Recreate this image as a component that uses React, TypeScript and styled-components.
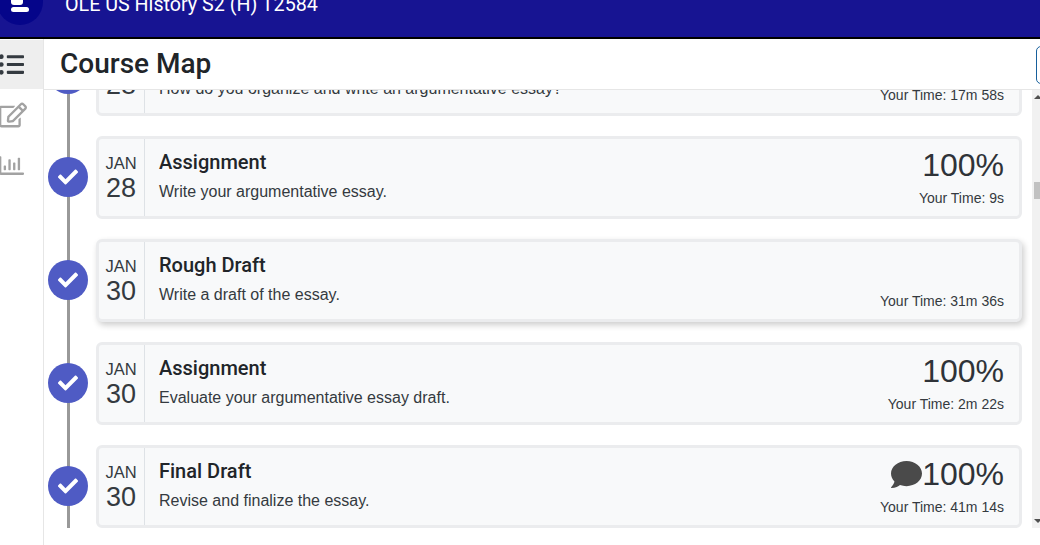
import React, { FunctionComponent } from 'react';
import styled, { createGlobalStyle } from 'styled-components';
import { FaCheck, FaComment, FaListUl, FaRegChartBar, FaRegEdit } from 'react-icons/fa';

interface Activity {
  month: string;
  day: string;
  title: string;
  text: string;
  time: string;
  score?: string;
  hasComment?: boolean;
  raised?: boolean;
}

const activities: Activity[] = [
  { month: 'JAN', day: '28', title: 'Lesson', text: 'How do you organize and write an argumentative essay?', time: '17m 58s' },
  { month: 'JAN', day: '28', title: 'Assignment', text: 'Write your argumentative essay.', time: '9s', score: '100%' },
  { month: 'JAN', day: '30', title: 'Rough Draft', text: 'Write a draft of the essay.', time: '31m 36s', raised: true },
  { month: 'JAN', day: '30', title: 'Assignment', text: 'Evaluate your argumentative essay draft.', time: '2m 22s', score: '100%' },
  { month: 'JAN', day: '30', title: 'Final Draft', text: 'Revise and finalize the essay.', time: '41m 14s', score: '100%', hasComment: true }
];

const GlobalStyle = createGlobalStyle`
  html, body {
    margin: 0;
    height: 100%;
    overflow: hidden;
    background: #fff;
    font-family: "Liberation Sans", Arial, sans-serif;
    color: #212529;
  }
`;

const Page = styled.div`
  width: 1040px;
  height: 545px;
  display: flex;
  flex-direction: column;
  overflow: hidden;
`;

const TopBar = styled.header`
  height: 37px;
  flex: none;
  background: #171492;
  border-bottom: 2px solid #000;
  display: flex;
  align-items: flex-end;
  overflow: hidden;
`;

const Avatar = styled.svg`
  width: 46px;
  height: 46px;
  margin: 0 0 12px -3px;
  flex: none;
`;

const CourseName = styled.div`
  margin: 0 0 20px 22px;
  font-family: Roboto, sans-serif;
  font-size: 19.7px;
  line-height: 24px;
  color: #fff;
  white-space: nowrap;
`;

const Main = styled.div`
  flex: 1;
  min-height: 0;
  display: flex;
`;

const SideNav = styled.nav`
  width: 43px;
  flex: none;
  padding-top: 1px;
  border-right: 1px solid #e6e6e6;
  display: flex;
  flex-direction: column;
  gap: 1px;
`;

const NavItem = styled.div<{ $active?: boolean; $iconSize: number }>`
  height: ${({ $active }): string => ($active ? '49px' : '50px')};
  flex: none;
  background: ${({ $active }): string => ($active ? '#eee' : 'transparent')};
  color: ${({ $active }): string => ($active ? '#343a40' : '#a2a2a2')};
  font-size: ${({ $iconSize }): string => `${$iconSize}px`};
  display: flex;
  align-items: center;
  overflow: hidden;
  svg {
    margin: -1px 0 0 -1px;
  }
`;

const Content = styled.div`
  flex: 1;
  min-width: 0;
  display: flex;
  flex-direction: column;
`;

const TitleBar = styled.div`
  height: 50px;
  flex: none;
  padding-left: 16px;
  border-bottom: 1px solid #e6e6e6;
  display: flex;
  align-items: center;
  justify-content: space-between;
`;

const Title = styled.h1`
  margin: 0 0 2px;
  font-family: Roboto, sans-serif;
  font-size: 28px;
  font-weight: 500;
  color: #212529;
`;

const ToolButton = styled.div`
  width: 12px;
  height: 38px;
  box-sizing: border-box;
  margin: 2px -9px 0 0;
  border: 1px solid #17609c;
  border-radius: 5px;
  transform: translateX(-1px);
`;

const Body = styled.div`
  height: 438px;
  flex: none;
  display: flex;
  overflow: hidden;
`;

const Timeline = styled.div`
  flex: 1;
  min-width: 0;
  overflow: hidden;
`;

const List = styled.div`
  margin-top: -57px;
  padding: 0 10px 0 4px;
  display: flex;
  flex-direction: column;
  gap: 20px;
`;

const Row = styled.div`
  display: flex;
  align-items: center;
  position: relative;
  &::before {
    content: '';
    position: absolute;
    left: 19px;
    top: -20px;
    bottom: 0;
    width: 3px;
    background: #999;
  }
`;

const Dot = styled.div`
  width: 40px;
  height: 40px;
  flex: none;
  margin: 0 8px 2px 0;
  border-radius: 50%;
  background: #4f5bc4;
  color: #fff;
  font-size: 20px;
  display: flex;
  align-items: center;
  justify-content: center;
  position: relative;
`;

const Card = styled.div<{ $raised?: boolean }>`
  flex: 1;
  min-width: 0;
  height: 83px;
  box-sizing: border-box;
  display: flex;
  background: #f8f9fa;
  border: 3px solid #ebecee;
  border-radius: 6px;
  box-shadow: ${({ $raised }): string => ($raised ? '2px 3px 6px rgba(0, 0, 0, 0.2)' : 'none')};
`;

const DateCell = styled.div`
  width: 46px;
  flex: none;
  box-sizing: border-box;
  border-right: 1px solid #dee2e6;
  padding: 15px 1px 0 0;
  text-align: center;
  color: #343a40;
`;

const Month = styled.div`
  font-size: 16.5px;
  line-height: 18px;
`;

const Day = styled.div`
  font-size: 27px;
  line-height: 33px;
`;

const Details = styled.div`
  flex: 1;
  min-width: 0;
  padding: 10px 0 0 14px;
`;

const CardTitle = styled.div`
  font-family: Roboto, sans-serif;
  font-size: 20px;
  font-weight: 500;
  line-height: 27px;
  color: #212529;
`;

const CardText = styled.div`
  margin-top: 6px;
  font-size: 16px;
  line-height: 20px;
  color: #343a40;
`;

const Result = styled.div`
  width: 300px;
  flex: none;
  box-sizing: border-box;
  padding: 0 15px 10px 0;
  display: flex;
  flex-direction: column;
  align-items: flex-end;
  justify-content: flex-end;
`;

const Score = styled.div`
  display: flex;
  align-items: center;
  font-size: 32px;
  line-height: 36px;
  color: #2f3338;
  margin-bottom: 7px;
  svg {
    color: #4a4a4a;
    font-size: 31px;
  }
`;

const Time = styled.div`
  font-size: 14px;
  line-height: 16px;
  color: #343a40;
`;

const Scrollbar = styled.div`
  width: 8px;
  height: 438px;
  flex: none;
  background: #f1f1f1;
  position: relative;
`;

const Arrow = styled.div<{ $down?: boolean }>`
  position: absolute;
  left: 2px;
  ${({ $down }): string => ($down ? 'bottom: 5px; border-top: 4px solid #505050;' : 'top: 5px; border-bottom: 4px solid #505050;')}
  border-left: 4px solid transparent;
  border-right: 4px solid transparent;
`;

const Thumb = styled.div`
  position: absolute;
  left: 2px;
  right: 0;
  top: 92px;
  height: 17px;
  background: #c1c1c1;
`;

const BottomSpace = styled.div`
  flex: 1;
`;

const ActivityRow: FunctionComponent<{ activity: Activity }> = ({ activity }) => (
  <Row>
    <Dot><FaCheck /></Dot>
    <Card $raised={ activity.raised }>
      <DateCell>
        <Month>{ activity.month }</Month>
        <Day>{ activity.day }</Day>
      </DateCell>
      <Details>
        <CardTitle>{ activity.title }</CardTitle>
        <CardText>{ activity.text }</CardText>
      </Details>
      <Result>
        { activity.score && (
          <Score>
            { activity.hasComment && <FaComment /> }
            { activity.score }
          </Score>
        ) }
        <Time>Your Time: { activity.time }</Time>
      </Result>
    </Card>
  </Row>
);

const App: FunctionComponent = () => (
  <Page>
    <GlobalStyle />
    <TopBar>
      <Avatar viewBox='0 0 46 46'>
        <circle cx='23' cy='23' r='23' fill='#05058a' />
        <rect x='14' y='18' width='12' height='8' rx='3' fill='#fff' />
        <rect x='14' y='28' width='18' height='5' rx='2.5' fill='#fff' />
      </Avatar>
      <CourseName>OLE US History S2 (H) T2584</CourseName>
    </TopBar>
    <Main>
      <SideNav>
        <NavItem $active={ true } $iconSize={ 25 }><FaListUl /></NavItem>
        <NavItem $iconSize={ 28 }><FaRegEdit /></NavItem>
        <NavItem $iconSize={ 25 }><FaRegChartBar /></NavItem>
      </SideNav>
      <Content>
        <TitleBar>
          <Title>Course Map</Title>
          <ToolButton />
        </TitleBar>
        <Body>
          <Timeline>
            <List>
              { activities.map((activity, index) => (
                <ActivityRow key={ index } activity={ activity } />
              )) }
            </List>
          </Timeline>
          <Scrollbar>
            <Arrow />
            <Thumb />
            <Arrow $down={ true } />
          </Scrollbar>
        </Body>
        <BottomSpace />
      </Content>
    </Main>
  </Page>
);

export default App;
